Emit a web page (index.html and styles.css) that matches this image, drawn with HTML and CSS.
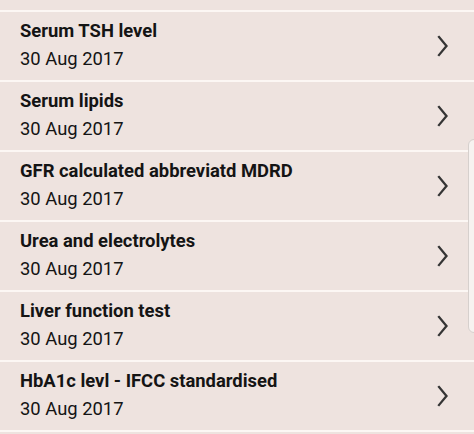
FILE: index.html
```html
<!DOCTYPE html>
<html>
<head>
<meta charset="utf-8">
<link rel="stylesheet" href="styles.css">
</head>
<body>
<div class="list">
  <div class="spacer"></div>
  <div class="row"><div class="text"><div class="title">Serum TSH level</div><div class="date">30 Aug 2017</div></div><svg class="chev" viewBox="0 0 11 22"><path d="M2 2 L9.5 11 L2 20"/></svg></div>
  <div class="row"><div class="text"><div class="title">Serum lipids</div><div class="date">30 Aug 2017</div></div><svg class="chev" viewBox="0 0 11 22"><path d="M2 2 L9.5 11 L2 20"/></svg></div>
  <div class="row"><div class="text"><div class="title">GFR calculated abbreviatd MDRD</div><div class="date">30 Aug 2017</div></div><svg class="chev" viewBox="0 0 11 22"><path d="M2 2 L9.5 11 L2 20"/></svg></div>
  <div class="row"><div class="text"><div class="title">Urea and electrolytes</div><div class="date">30 Aug 2017</div></div><svg class="chev" viewBox="0 0 11 22"><path d="M2 2 L9.5 11 L2 20"/></svg></div>
  <div class="row"><div class="text"><div class="title">Liver function test</div><div class="date">30 Aug 2017</div></div><svg class="chev" viewBox="0 0 11 22"><path d="M2 2 L9.5 11 L2 20"/></svg></div>
  <div class="row"><div class="text"><div class="title">HbA1c levl - IFCC standardised</div><div class="date">30 Aug 2017</div></div><svg class="chev" viewBox="0 0 11 22"><path d="M2 2 L9.5 11 L2 20"/></svg></div>
  <div class="row last"></div>
</div>
<div class="scrollbar"></div>
</body>
</html>
```
FILE: styles.css
```css
html, body {
  margin: 0;
  padding: 0;
  background: #eee3df;
  width: 474px;
  height: 434px;
  overflow: hidden;
}
.list {
  font-family: Roboto, "Noto Sans", sans-serif;
  color: #141414;
}
.spacer {
  height: 10px;
}
.row {
  border-top: 2px solid #fcf7f4;
  height: 68px;
  display: flex;
  align-items: center;
  padding: 0 26px 0 20px;
  box-sizing: content-box;
}
.row.last {
  height: 10px;
}
.text {
  flex: 1;
  align-self: flex-start;
  padding-top: 5px;
}
.title {
  font-size: 18.4px;
  font-weight: 700;
  line-height: 28px;
}
.date {
  font-size: 18.4px;
  font-weight: 400;
  line-height: 28px;
}
.chev {
  width: 11px;
  height: 22px;
  fill: none;
  stroke: #353535;
  stroke-width: 2.3;
  stroke-linecap: square;
}
.scrollbar {
  position: absolute;
  left: 468px;
  top: 139px;
  width: 12px;
  height: 194px;
  background: #f7f2f0;
  border: 1px solid #d6d0cd;
  border-radius: 6px;
  box-sizing: border-box;
}
```
